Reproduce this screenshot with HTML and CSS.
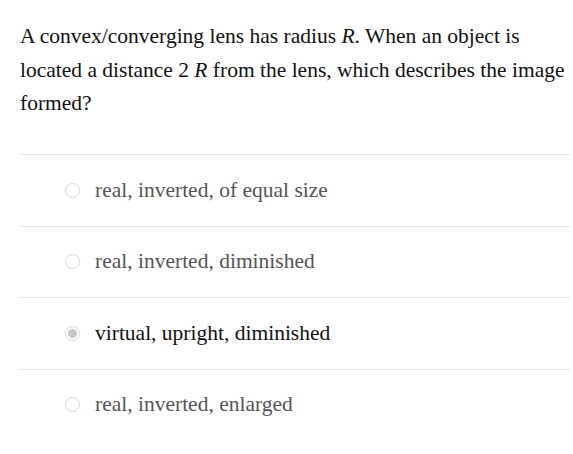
FILE: index.html
```html
<!DOCTYPE html>
<html>
<head>
<meta charset="utf-8">
<link rel="stylesheet" href="styles.css">
</head>
<body>
<div class="quiz">
  <p class="question">A convex/converging lens has radius <i>R</i>. When an object is located a distance 2&nbsp;<i>R</i> from the lens, which describes the image formed?</p>
  <ul class="options">
    <li class="option"><span class="radio"></span><span class="label">real, inverted, of equal size</span></li>
    <li class="option"><span class="radio"></span><span class="label">real, inverted, diminished</span></li>
    <li class="option selected"><span class="radio"></span><span class="label">virtual, upright, diminished</span></li>
    <li class="option"><span class="radio"></span><span class="label">real, inverted, enlarged</span></li>
  </ul>
</div>
</body>
</html>
```

FILE: styles.css
```css
html, body {
  margin: 0;
  padding: 0;
  background: #ffffff;
}
body {
  font-family: "Liberation Serif", "Times New Roman", serif;
  color: #111111;
}
.quiz {
  padding: 20px 3px 0 20px;
}
.question {
  margin: 0;
  font-size: 21.5px;
  line-height: 33.5px;
  color: #111111;
}
.options {
  list-style: none;
  margin: 33.5px 0 0 0;
  padding: 0;
}
.option {
  height: 70.5px;
  border-top: 1px solid #e3e3e3;
  display: flex;
  align-items: center;
  padding-left: 45px;
  gap: 15px;
  font-size: 21.5px;
  color: #555555;
}
.radio {
  width: 13px;
  height: 13px;
  border: 1px solid #d4d4d4;
  border-radius: 50%;
  box-sizing: content-box;
  display: flex;
  align-items: center;
  justify-content: center;
  flex: none;
}
.selected {
  color: #111111;
}
.selected .radio::after {
  content: "";
  width: 9px;
  height: 9px;
  border-radius: 50%;
  background: #c6c6c6;
}
```
